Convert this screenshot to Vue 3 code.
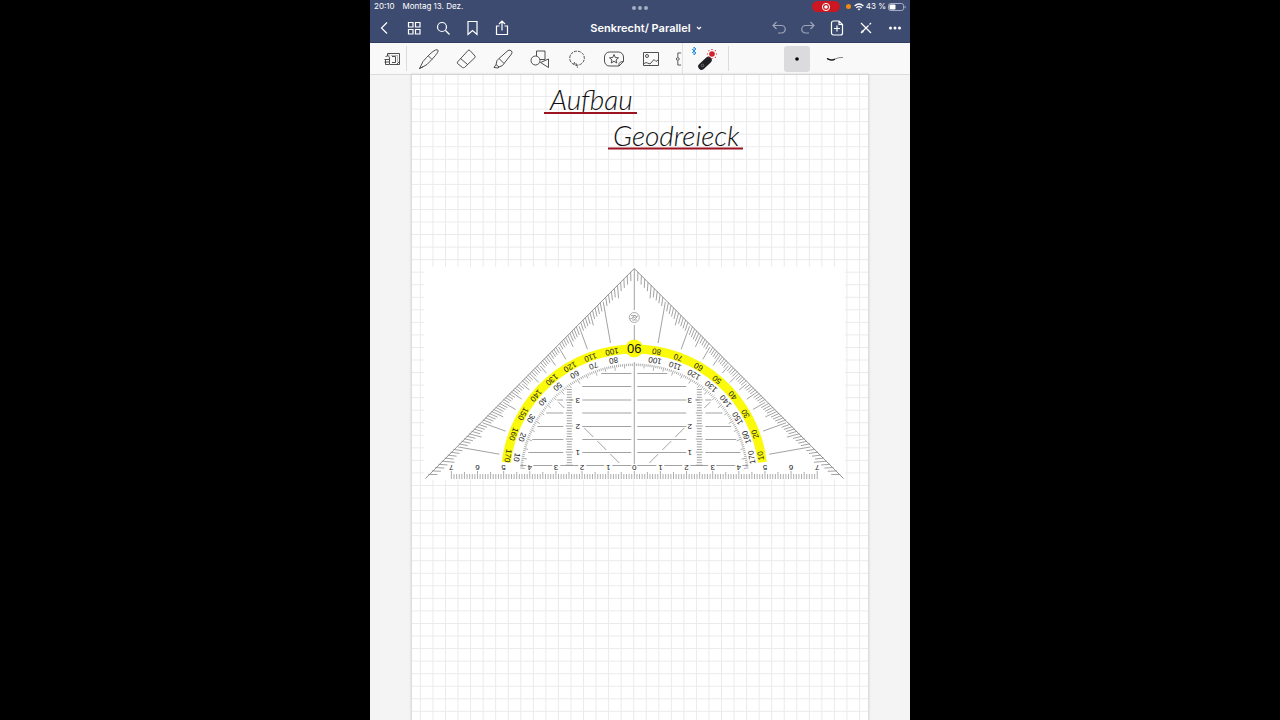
<script setup>
import { ref } from 'vue'

const title = ref('Senkrecht/ Parallel')

// Paper grid
const step = 12.546
const columns = Array.from({ length: 36 }, (_, i) => 420.4 + i * step)
const rows = Array.from({ length: 52 }, (_, i) => 84 + i * step)

// Set square geometry: protractor centre, leg length, centimetre
const cx = 634.3
const cy = 478
const leg = 209.5
const cm = 26.13
const rad = (d) => (d * Math.PI) / 180
const at = (deg, r) => [cx + r * Math.cos(rad(deg)), cy - r * Math.sin(rad(deg))]
const seg = (deg, a, b) => {
  const [x1, y1] = at(deg, a)
  const [x2, y2] = at(deg, b)
  return `M${x1.toFixed(2)} ${y1.toFixed(2)}L${x2.toFixed(2)} ${y2.toFixed(2)}`
}

let edge = ''
let rays = ''
let inner = ''
for (let d = 1; d < 180; d++) {
  const r = leg / (Math.sin(rad(d)) + Math.abs(Math.cos(rad(d))))
  if (d % 10 === 0) {
    if (d !== 90) rays += seg(d, 137, r - 2)
  } else {
    const steep = Math.abs(d - 90) > 60 || Math.abs(d - 90) < 25
    edge += seg(d, r - (d % 5 === 0 ? 13 : steep ? 9 : 7), r)
  }
  if (d > 4 && d < 176 && d !== 90) {
    inner += seg(d, d % 10 === 0 ? 109 : d % 5 === 0 ? 110 : 112, 114.5)
  }
}

const labels = []
for (let d = 10; d <= 170; d += 10) {
  if (d === 90) continue
  const [ox, oy] = at(d, 128)
  const [ix, iy] = at(d, 119)
  const turn = 270 - d
  labels.push({ key: 'o' + d, x: ox, y: oy, turn, text: d })
  labels.push({ key: 'i' + d, x: ix, y: iy, turn, text: 180 - d })
}
const arc = (() => {
  const [x1, y1] = at(173, 129)
  const [x2, y2] = at(7, 129)
  return `M${x1} ${y1}A129 129 0 0 1 ${x2} ${y2}`
})()

let base = ''
for (let i = -70; i <= 70; i++) {
  const x = cx + (i * cm) / 10
  base += `M${x.toFixed(2)} 479V${i % 10 === 0 ? 471 : i % 5 === 0 ? 472 : 474}`
}
const cms = Array.from({ length: 15 }, (_, i) => ({ x: cx + (i - 7) * cm, text: Math.abs(i - 7) }))

// Parallel lines, mirrored on both sides of the height
const half = [
  [373.5, 3, 33], [386.5, 3, 52], [400, 3, 52], [413, 3, 52],
  [426.5, 3, 52], [439.5, 3, 52], [452.5, 3, 52],
  [400, 61, 65], [400, 71, 77], [413, 71, 88], [426.5, 71, 97],
  [439.5, 71, 102], [452.5, 71, 106],
  [465.5, 3, 22], [465.5, 30, 48], [465.5, 56, 74], [465.5, 82, 101], [465.5, 108, 114]
]
let guides = ''
let diagonals = ''
for (const s of [-1, 1]) {
  for (const [y, a, b] of half) guides += `M${cx + s * a} ${y}H${cx + s * b}`
  for (let i = 0; i < 30; i++) {
    const y = 389.5 + i * 2.61
    const w = i % 5 === 4 ? 3.5 : 2.5
    guides += `M${cx + s * 65 - w} ${y}h${w * 2}`
  }
  for (const [a, y, b] of [[50, 428, 41], [37, 441, 28], [24, 454, 15], [76, 402, 70]]) {
    diagonals += `M${cx + s * a} ${y}L${cx + s * b} ${y + (a - b)}`
  }
}
</script>

<template>
  <div class="stage">
    <main class="tablet">
      <header class="top">
        <div class="status">
          <div class="clock"><span>20:10</span><span>Montag 13. Dez.</span></div>
          <div class="dots"><i></i><i></i><i></i></div>
          <div class="state">
            <span class="record">
              <svg width="10" height="10" viewBox="0 0 10 10"><circle cx="5" cy="5" r="3.6" fill="none" stroke="#fff" /><circle cx="5" cy="5" r="1.8" fill="#fff" /></svg>
            </span>
            <i class="mic"></i>
            <svg width="10" height="8" viewBox="0 0 10 8" fill="none" stroke="#fff" stroke-width="1.3"><path d="M.6 3Q5-.9 9.4 3M2.3 4.8Q5 2.6 7.7 4.8" /><path d="M3.6 6Q5 5 6.4 6L5 7.6Z" fill="#fff" stroke="none" /></svg>
            <span>43 %</span>
            <svg width="18" height="8" viewBox="0 0 18 8"><rect x=".5" y=".5" width="15" height="7" rx="2" fill="none" stroke="#a5adc6" /><rect x="1.5" y="1.5" width="6" height="5" rx="1" fill="#fff" /><path d="M17 2.8v2.4" stroke="#a5adc6" /></svg>
          </div>
        </div>
        <nav class="nav">
          <div class="group">
            <button aria-label="Zurück"><svg width="18" height="18" viewBox="0 0 18 18"><path d="M11 3.5L5.5 9L11 14.5" /></svg></button>
            <button aria-label="Übersicht"><svg width="18" height="18" viewBox="0 0 18 18"><path d="M3.5 3.5h4.5v4.500h-4.500zM10.500 3.500h4.500v4.500h-4.500zM3.500 10.500h4.500v4.500h-4.500zM10.500 10.500h4.500v4.500h-4.500z" /></svg></button>
            <button aria-label="Suchen"><svg width="18" height="18" viewBox="0 0 18 18"><circle cx="8" cy="8" r="4.5" /><path d="M11.5 11.5L15.5 15.5" /></svg></button>
            <button aria-label="Lesezeichen"><svg width="18" height="18" viewBox="0 0 18 18"><path d="M5 2.5h9v13L9.5 11.5L5 15.5Z" /></svg></button>
            <button aria-label="Teilen"><svg width="18" height="18" viewBox="0 0 18 18"><path d="M7.5 7H4.5v8.5h11V7h-3M10 11.5V2.5M7 5L10 2L13 5" /></svg></button>
          </div>
          <button class="title">{{ title }}<svg width="6" height="4" viewBox="0 0 6 4"><path d="M1 1L3 3L5 1" /></svg></button>
          <div class="group end">
            <button class="dim" aria-label="Rückgängig"><svg width="18" height="18" viewBox="0 0 18 18"><path d="M6.5 3L3 6.5L6.5 10M3 6.5h8.500a3.500 3.500 0 0 1 0 7.500H8" /></svg></button>
            <button class="dim" aria-label="Wiederholen"><svg width="18" height="18" viewBox="0 0 18 18"><path d="M11.5 3L15 6.5L11.5 10M15 6.5H6.500a3.500 3.500 0 0 0 0 7.500H10" /></svg></button>
            <button aria-label="Seite hinzufügen"><svg width="18" height="18" viewBox="0 0 18 18"><path d="M3.5 4a2 2 0 0 1 2-2H11l3.500 3.500v8.500a2 2 0 0 1-2 2h-7a2 2 0 0 1-2-2ZM11 2v3.500h3.500M9 6.500v6M6 9.500h6" /></svg></button>
            <button aria-label="Stift aus"><svg width="18" height="18" viewBox="0 0 18 18"><path d="M4 4L14 14M4 14L11.500 6.500M12.500 5.500L14 4" /><path d="M4 14l1-3 2 2z" fill="#fff" stroke="none" /></svg></button>
            <button aria-label="Mehr"><svg width="18" height="18" viewBox="0 0 18 18"><g fill="#fff" stroke="none"><circle cx="4.500" cy="9" r="1.500" /><circle cx="9" cy="9" r="1.500" /><circle cx="13.500" cy="9" r="1.500" /></g></svg></button>
          </div>
        </nav>
      </header>

      <div class="tools" role="toolbar">
        <button class="lens" aria-label="Zoom"><svg width="20" height="20" viewBox="0 0 20 20"><path d="M5.500 7V4.500H17.500V15.500H8" /><path d="M3.500 7.500Q7.500 6 7.500 9V15.500H3.500M10 7.500h3.500v6H10M2.500 10.500h4.500M2.500 13h4.500M3.500 10.500v5M14.500 15.500l3-3" /><path d="M7 4.500v3M9 6.500h7M15.500 7v6" opacity=".4" /></svg></button>
        <button aria-label="Stift"><svg width="22" height="22" viewBox="0 0 22 22"><path d="M1.500 20.500L5 13.500Q13 4 17.500 2Q20 1 20.200 3Q20 5.500 9 16.500L5.500 18.500ZM1.500 20.500L5.500 18.500M10.500 8L14 11.500" /></svg></button>
        <button aria-label="Radierer"><svg width="22" height="22" viewBox="0 0 22 22"><path d="M2.500 14L13 2.500Q14 1.500 15 2.500L20 8Q20.500 9 20 9.500L9.500 19.500Q8.500 20 7.500 19.500L2.500 15.500Q2 15 2.500 14ZM5.500 10.500L12.500 16.500" /></svg></button>
        <button aria-label="Textmarker"><svg width="22" height="22" viewBox="0 0 22 22"><path d="M2 19.500L4 16.500L7 19L6 20ZM4 16.500L5 12.500L7 10.500L12 15.500L10.500 17.500L7 19M7 10.500L16 2.500Q18 1.500 19.500 3Q20.500 4.500 19.500 6L12 15.500" /></svg></button>
        <button aria-label="Formen"><svg width="22" height="22" viewBox="0 0 22 22"><circle cx="6.500" cy="12.500" r="4.500" /><path d="M7.500 8V3H16V11.500H11M11.500 14.500L19.500 11V19.500Z" /></svg></button>
        <button aria-label="Lasso"><svg width="22" height="22" viewBox="0 0 22 22"><path d="M8 16.500A7.300 7 0 1 1 14.500 16.300Q11.500 18 8.500 16.500Q7 14.500 9 14.500Q11 15.500 10 18L12 19.500" stroke-dasharray="3 1" /></svg></button>
        <button aria-label="Elemente"><svg width="22" height="22" viewBox="0 0 22 22"><path d="M16 18H6.500A5 5 0 0 1 1.500 13V9A5 5 0 0 1 6.500 4H15.500A5 5 0 0 1 20.500 9V13.500L16 18V15.500Q16.500 13.500 20.500 13.500" /><path d="M11 6.500L12.300 9.500L15.500 9.800L13 12L13.800 15L11 13.300L8.200 15L9 12L6.500 9.800L9.700 9.500Z" /></svg></button>
        <button aria-label="Bild"><svg width="22" height="22" viewBox="0 0 22 22"><rect x="3.500" y="4.500" width="15" height="13" /><circle cx="7" cy="8" r="1.500" /><path d="M4 15.500Q6 14 7.500 15L10 16L14 11.500L16 13.500L18 12" /></svg></button>
        <button class="cut" aria-label="Text"><svg width="14" height="22" viewBox="0 0 14 22"><path d="M13 4.500H9.500V9M9.500 13V17.500H13" /><circle cx="9.500" cy="11" r="1.500" /></svg></button>
        <button class="laser" aria-label="Laserpointer">
          <svg width="30" height="26" viewBox="0 0 30 26">
            <path d="M1 3L5 7L3 9V1L5 3L1 7" style="stroke: #1686de" />
            <path d="M10.500 20.500L17.500 14" style="stroke: #202124; stroke-width: 6.500; stroke-linecap: round" />
            <circle cx="11.500" cy="19.500" r="1.300" style="stroke: #777" />
            <circle cx="21" cy="8" r="2.800" fill="#d3202a" stroke="none" />
            <path d="M21 3v1M21 12v1M16 8h1M25 8h1M17.500 4.500l.7.700M24 11l.7.700M17.500 11.500l.7-.7M24 5l.7-.7" style="stroke: #d3202a; stroke-width: 1.200" />
          </svg>
        </button>
        <button class="swatch" aria-label="Punkt"><svg width="8" height="8" viewBox="0 0 8 8"><circle cx="4" cy="4" r="1.800" fill="#000" stroke="none" /></svg></button>
        <button class="line" aria-label="Linie"><svg width="20" height="10" viewBox="0 0 20 10"><path d="M2 4.500Q6 7 10 5T18 3.500" style="stroke: #777" /><path d="M2 4.500Q6 7.200 10 5.200" style="stroke: #111; stroke-width: 1.200" /></svg></button>
      </div>

      <section class="desk">
        <svg class="paper" viewBox="412 75 456 645" preserveAspectRatio="xMidYMin slice">
          <path class="grid" :d="columns.map((x) => `M${x} 75V720`).join('') + rows.map((y) => `M412 ${y}H868`).join('')" />

          <text class="ink" x="550" y="110">Aufbau</text>
          <path class="rule" d="M544 113H637" />
          <text class="ink" x="613" y="146">Geodreieck</text>
          <path class="rule" d="M608 148.500H743" />

          <rect x="424" y="267" width="421" height="212.500" fill="#fff" />
          <path :d="arc" class="band" />
          <circle :cx="cx" cy="348.500" r="9" fill="#fafa0a" />
          <path class="outline" d="M425.500 478.500L634.300 268.500L843.500 478.500" />
          <path class="tick" :d="edge + rays" />
          <path class="fine" :d="inner + base" />
          <path class="tick" :d="guides + diagonals" />
          <path class="height" d="M634.300 269V310M634.300 325V340M634.300 362V464" />
          <g class="mark"><circle :cx="cx" cy="317.500" r="5" /><path d="M630 319L638 316M631 315.500h5M632 320h5M632 318l3-3M634 320l3-3" /></g>
          <text v-for="l in labels" :key="l.key" class="num" :transform="`translate(${l.x} ${l.y}) rotate(${l.turn})`" y="3">{{ l.text }}</text>
          <text class="ninety" :transform="`translate(${cx} 348.500) rotate(180)`" y="5">90</text>
          <text v-for="c in cms" :key="'c' + c.x" class="num" :transform="`translate(${c.x} 468) rotate(180)`" y="3">{{ c.text }}</text>
          <template v-for="n in 3" :key="'n' + n">
            <text class="num" :transform="`translate(${cx - 56.500} ${479 - n * cm}) rotate(180)`" y="3">{{ n }}</text>
            <text class="num" :transform="`translate(${cx + 55.500} ${479 - n * cm}) rotate(180)`" y="3">{{ n }}</text>
          </template>
        </svg>
      </section>
    </main>
  </div>
</template>

<style>
body {
  margin: 0;
  background: #000;
}
</style>

<style scoped>
.stage {
  height: 100vh;
  display: flex;
  justify-content: center;
  background: #000;
  font-family: Inter, "Liberation Sans", sans-serif;
}
.tablet {
  height: 100%;
  aspect-ratio: 3 / 4;
  display: flex;
  flex-direction: column;
  background: #f4f4f5;
  overflow: hidden;
}
button {
  border: 0;
  padding: 0;
  margin: 0;
  background: none;
  font: inherit;
  color: inherit;
  display: flex;
  align-items: center;
  justify-content: center;
  flex: none;
}
.top {
  background: #3e4b70;
  color: #fff;
  border-bottom: 1px solid #303c60;
}
.status {
  height: 13px;
  padding: 0 4px;
  display: grid;
  grid-template-columns: 1fr auto 1fr;
  align-items: center;
  font-size: 8px;
  line-height: 13px;
}
.clock {
  display: flex;
  gap: 8px;
}
.dots {
  display: flex;
  gap: 2px;
  padding-top: 3px;
}
.dots i {
  width: 4px;
  height: 4px;
  border-radius: 50%;
  background: #a5adc6;
}
.state {
  display: flex;
  align-items: center;
  justify-content: flex-end;
  gap: 2px;
}
.record {
  width: 28px;
  height: 11px;
  border-radius: 6px;
  background: #cb1722;
  display: flex;
  align-items: center;
  justify-content: center;
  margin-right: 4px;
}
.mic {
  width: 5px;
  height: 5px;
  border-radius: 50%;
  background: #ef8a12;
  margin-right: 1px;
}
.nav {
  height: 29px;
  display: grid;
  grid-template-columns: 1fr auto 1fr;
  align-items: center;
}
.nav svg {
  fill: none;
  stroke: #fff;
  stroke-width: 1.2;
}
.group {
  display: flex;
}
.group button {
  width: 29px;
  height: 29px;
}
.end {
  justify-content: flex-end;
  padding-right: 1px;
}
.dim {
  opacity: 0.5;
}
.title {
  padding-left: 12px;
  gap: 5px;
  font-size: 11px;
  font-weight: 600;
}
.tools {
  height: 31px;
  display: flex;
  align-items: center;
  background: #f9f9fa;
  border-bottom: 1px solid #dcdcde;
}
.tools button {
  width: 37px;
  height: 31px;
}
.tools svg {
  fill: none;
  stroke: #3c3c3e;
  stroke-width: 0.9;
  stroke-linejoin: round;
}
.tools .lens {
  width: 29px;
  height: 25px;
  margin: 0 3px 0 8px;
  border-right: 1px solid #dcdcde;
}
.tools .cut {
  width: 14px;
  overflow: hidden;
  border-right: 1px solid #e2e2e4;
}
.tools .laser {
  width: 46px;
  height: 25px;
  border-right: 1px solid #dcdcde;
}
.tools .swatch {
  width: 26px;
  height: 26px;
  margin: 0 12px 0 55px;
  border-radius: 3px;
  background: #dbdbdd;
}
.tools .line {
  width: 26px;
}
.desk {
  flex: 1;
  min-height: 0;
  display: flex;
  padding: 0 42px;
}
.paper {
  flex: 1;
  min-width: 0;
  height: 100%;
  background: #fff;
  box-shadow: 0 0 2px 1px #d0d0d2;
}
.grid {
  stroke: #ebebed;
  fill: none;
}
.ink {
  font-family: Lato, sans-serif;
  font-style: italic;
  font-weight: 300;
  font-size: 28px;
  fill: #111;
}
.rule {
  stroke: #9c1420;
  stroke-width: 2;
}
.band {
  fill: none;
  stroke: #fafa0a;
  stroke-width: 9;
}
.outline,
.tick,
.fine,
.height,
.mark {
  fill: none;
  stroke: #8a8a8a;
  stroke-width: 0.8;
}
.outline {
  stroke: #777;
}
.fine {
  stroke-width: 0.7;
}
.mark {
  stroke: #999;
}
.num,
.ninety {
  font-family: "Liberation Sans", Arial, sans-serif;
  font-size: 8px;
  text-anchor: middle;
  fill: #222;
}
.ninety {
  font-size: 13px;
  fill: #111;
}
</style>
